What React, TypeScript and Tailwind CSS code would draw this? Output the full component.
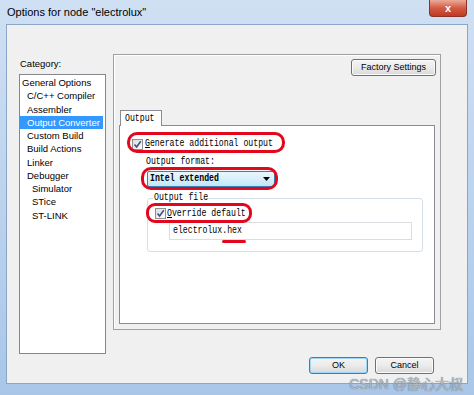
import React from "react";

const mono = "font-['Liberation_Mono',monospace] text-[10px] leading-[12px] inline-block origin-left scale-x-[0.82] whitespace-nowrap text-black";

function Check() {
  return (
    <div className="w-[11px] h-[11px] border border-[#8e8f8f] bg-gradient-to-br from-[#dcdcdc] to-[#ffffff] flex items-center justify-center shrink-0">
      <svg width="9" height="9" viewBox="0 0 9 9">
        <path d="M1.5 4.5 L3.6 7 L7.8 1.2" fill="none" stroke="#3d4f86" strokeWidth="1.6" />
      </svg>
    </div>
  );
}

function ListItem({ label, indent, selected }: { label: string; indent: string; selected?: boolean }) {
  return (
    <div
      className={
        "h-[13.25px] leading-[13.25px] text-[9.5px] whitespace-nowrap " +
        indent +
        (selected ? " bg-[#3399ff] text-white w-[83px]" : " text-black")
      }
    >
      {label}
    </div>
  );
}

function WinButton({ label, def, w }: { label: string; def?: boolean; w: string }) {
  return (
    <div
      className={
        "h-[17px] rounded-[3px] border flex items-center justify-center text-[9px] text-black bg-gradient-to-b from-[#f4f4f4] via-[#ebebeb] to-[#d9d9d9] " +
        w +
        (def ? " border-[#3c7fb1] shadow-[inset_0_0_0_1px_#9fd6f5]" : " border-[#707070] shadow-[inset_0_0_0_1px_#fbfbfb]")
      }
    >
      {label}
    </div>
  );
}

export default function App() {
  return (
    <div className="w-[474px] h-[395px] relative overflow-hidden bg-gradient-to-b from-[#cfe0f3] via-[#bcd3ee] to-[#a9c6e8] font-['Liberation_Sans',sans-serif]">
      {/* title bar */}
      <div className="h-[25px] flex items-center pl-[7px] text-[11px] text-black">
        Options for node "electrolux"
      </div>
      <div className="absolute top-0 right-[7px] w-[38px] h-[17px] rounded-b-[4px] border border-t-0 border-[#8a3326] bg-gradient-to-b from-[#eba99a] via-[#d25a42] to-[#c03a22] flex items-center justify-center">
        <span className="text-white text-[11px] font-bold leading-none">x</span>
      </div>

      {/* client area */}
      <div className="ml-[7px] w-[460px] h-[358px] bg-[#f0f0f0] shadow-[0_0_0_1px_#8aa7c9] flex flex-col">
        <div className="flex pt-[29px] pl-[12px]">
          {/* category column */}
          <div className="w-[87px] mt-[3px] flex flex-col">
            <div className="text-[9.5px] leading-[14px] pl-[1px] text-black">Category:</div>
            <div className="mt-[3px] h-[280px] border border-[#828790] bg-white pt-[1px]">
              <ListItem label="General Options" indent="pl-[2px]" />
              <ListItem label="C/C++ Compiler" indent="pl-[7px]" />
              <ListItem label="Assembler" indent="pl-[7px]" />
              <ListItem label="Output Converter" indent="pl-[7px]" selected />
              <ListItem label="Custom Build" indent="pl-[7px]" />
              <ListItem label="Build Actions" indent="pl-[7px]" />
              <ListItem label="Linker" indent="pl-[7px]" />
              <ListItem label="Debugger" indent="pl-[7px]" />
              <ListItem label="Simulator" indent="pl-[12px]" />
              <ListItem label="STice" indent="pl-[12px]" />
              <ListItem label="ST-LINK" indent="pl-[12px]" />
            </div>
          </div>

          {/* right panel */}
          <div className="ml-[7px] w-[328px] h-[276px] border border-[#a0a0a0] shadow-[inset_1px_1px_0_#ffffff] flex flex-col">
            <div className="flex justify-end pt-[4px] pr-[4px]">
              <WinButton label="Factory Settings" w="w-[85px]" />
            </div>
            <div className="mt-[34px] pl-[6px] flex relative z-10">
              <div className="w-[42px] h-[16px] border border-b-0 border-[#898c95] bg-white flex items-center pl-[4px]">
                <span className={mono}>Output</span>
              </div>
            </div>
            <div className="mx-[5px] mb-[5px] -mt-[1px] flex-1 border border-[#898c95] bg-white pl-[12px] pt-[12px] flex flex-col text-[10px] leading-[12px]">
              <div className="flex items-center gap-[2px] h-[12px]">
                <Check />
                <span className={mono}>
                  <span className="underline">G</span>enerate additional output
                </span>
              </div>
              <div className="mt-[6px] ml-[14px] h-[12px] flex items-center">
                <span className={mono}>Output format:</span>
              </div>
              <div className="mt-[3px] ml-[15px] w-[128px] h-[16px] rounded-[2px] border border-[#3c7fb1] bg-gradient-to-b from-[#eaf6fd] via-[#d9f0fc] to-[#bee6fd] flex items-center justify-between pl-[2px] pr-[4px]">
                <span className={mono + " font-bold"}>Intel extended</span>
                <svg width="7" height="4" viewBox="0 0 7 4">
                  <path d="M0 0 H7 L3.5 4 Z" fill="#000" />
                </svg>
              </div>
              <div className="mt-[11px] ml-[15px] w-[276px] relative rounded-[3px] border border-[#d5dfe5] pt-[9px] pl-[7px] pb-[11px]">
                <div className="absolute -top-[7px] left-[5px] bg-white pl-[1px] w-[50px] h-[12px] flex items-center">
                  <span className={mono}>Output file</span>
                </div>
                <div className="flex items-center gap-[1px] h-[11px]">
                  <Check />
                  <span className={mono}>
                    <span className="underline">O</span>verride default
                  </span>
                </div>
                <div className="mt-[3px] ml-[14px] w-[243px] h-[18px] border border-[#dadde2] flex items-center pl-[3px]">
                  <span className={mono}>electrolux.hex</span>
                </div>
              </div>
            </div>
          </div>
        </div>

        {/* bottom buttons */}
        <div className="mt-[3px] flex justify-end gap-[7px] pr-[33px]">
          <WinButton label="OK" def w="w-[59px]" />
          <WinButton label="Cancel" w="w-[59px]" />
        </div>
      </div>

      {/* red annotations */}
      <div className="absolute left-[127px] top-[132px] w-[158px] h-[21px] border-[3px] border-[#e3071d] rounded-[10px]" />
      <div className="absolute left-[141px] top-[167px] w-[137px] h-[23px] border-[3px] border-[#e3071d] rounded-[10px]" />
      <div className="absolute left-[146px] top-[203px] w-[106px] h-[20px] border-[3px] border-[#e3071d] rounded-[9px]" />
      <div className="absolute left-[222px] top-[240px] w-[24px] h-[3px] bg-[#e3071d] rounded-full" />

      {/* watermark */}
      <div className="absolute right-[11px] bottom-[3px] text-[14px] leading-[16px] text-[#b4bcc6] [text-shadow:0_0_1px_#4d5966] font-['Liberation_Sans','Noto_Sans_CJK_SC',sans-serif] whitespace-nowrap">
        CSDN @静心大叔
      </div>
    </div>
  );
}
